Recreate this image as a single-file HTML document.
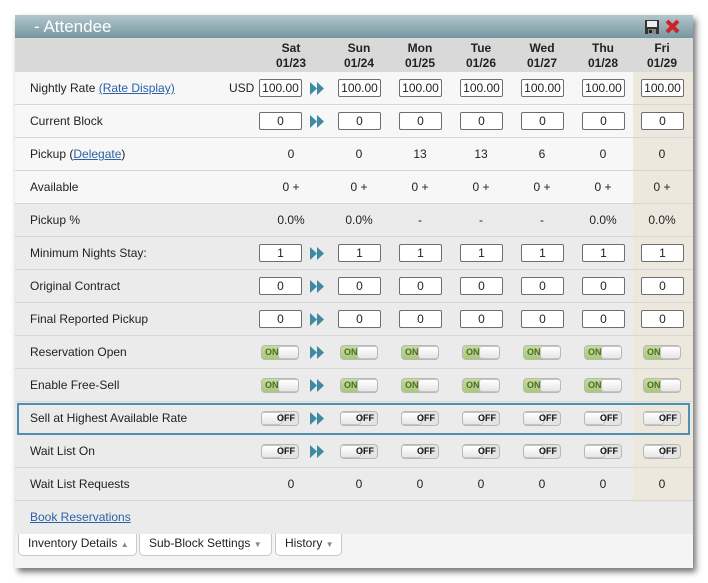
<!DOCTYPE html>
<html><head><style>
*{box-sizing:border-box;margin:0;padding:0}
body{width:708px;height:583px;background:#fff;font-family:"Liberation Sans",Arial,sans-serif;font-size:12px;color:#222;position:relative;overflow:hidden}
#p{position:absolute;left:15px;top:15px;width:678px;height:553px;background:#f4f4f4;box-shadow:3px 4px 6px rgba(0,0,0,.55);overflow:hidden}
#hd{position:absolute;left:0;top:0;width:678px;height:23px;background:linear-gradient(#b3c6cc,#7596a0);color:#fff;font-size:17px;line-height:23px;padding-left:19px}
#ch{position:absolute;left:0;top:23px;width:678px;height:34px;background:#d9d9d9}
.h{position:absolute;top:3px;width:60px;text-align:center;font-weight:bold;line-height:15px}
.r{position:absolute;left:0;width:678px;height:33px;border-bottom:1px solid #d6d6d6}
.l{position:absolute;left:15px;top:0;line-height:33px}
.a{color:#2a62a8;text-decoration:underline}
.in{position:absolute;top:7px;width:43px;height:18px;border:1px solid #6e6e6e;border-radius:2px;background:#fff;text-align:center;line-height:16px}
.t{position:absolute;width:60px;text-align:center;line-height:33px}
.ar{position:absolute;top:10px}
.tg{position:absolute;top:9px;width:38px;height:15px;border:1px solid #b8b8b8;border-radius:4px;background:#e4e4e4;font-size:9px;font-weight:bold;line-height:13px;overflow:hidden}
.on{background:linear-gradient(#c4dc9c,#a9c978);color:#4d6a2a;padding-left:3px}
.k{position:absolute;top:0;width:21px;height:13px;background:linear-gradient(#fff,#e6e6e6);border:1px solid #c4c4c4;border-radius:3px}
.on .k{right:-1px}
.off .k{left:-1px}
.off span{position:absolute;right:3px;color:#111}
#fri{position:absolute;left:618px;top:57px;width:60px;height:430px;background:#ece8de}
.tab{position:absolute;top:519px;height:22px;background:#fff;border:1px solid #c8c8c8;border-top:none;border-radius:0 0 5px 5px;line-height:19px;padding-left:9px;color:#222}
.tri{font-size:8px;color:#888}
</style></head><body>
<div id="p">
<div id="hd">- Attendee
<svg style="position:absolute;left:629px;top:4px" width="16" height="16"><rect x="1" y="1" width="14" height="14" fill="#333"/><rect x="3" y="2" width="10" height="6" fill="#eee"/><rect x="4" y="10" width="8" height="5" fill="#888"/><rect x="5" y="11" width="3" height="3" fill="#222"/></svg>
<svg style="position:absolute;left:650px;top:4px" width="15" height="15"><path d="M2 2L13 13M13 2L2 13" stroke="#d42020" stroke-width="4"/></svg>
</div>
<div id="ch">
<div class="h" style="left:246px">Sat<br>01/23</div>
<div class="h" style="left:314px">Sun<br>01/24</div>
<div class="h" style="left:375px">Mon<br>01/25</div>
<div class="h" style="left:436px">Tue<br>01/26</div>
<div class="h" style="left:497px">Wed<br>01/27</div>
<div class="h" style="left:558px">Thu<br>01/28</div>
<div class="h" style="left:617px">Fri<br>01/29</div>
</div>
<div style="position:absolute;left:0;top:57px;width:678px;height:132px;background:#f7f7f7"></div>
<div style="position:absolute;left:0;top:189px;width:678px;height:330px;background:#ebebeb"></div>
<div id="fri"></div>

<div class="r" style="top:57px"><div class="l">Nightly Rate <span class="a">(Rate Display)</span></div>
<div class="t" style="left:214px;width:30px;text-align:left">USD</div>
<div class="in" style="left:244px">100.00</div><svg class="ar" style="left:294px" width="17" height="13"><path d="M1 0L8 6.5L1 13ZM8 0L15 6.5L8 13Z" fill="#3f8aa0"/></svg>
<div class="in" style="left:323px">100.00</div><div class="in" style="left:384px">100.00</div><div class="in" style="left:445px">100.00</div><div class="in" style="left:506px">100.00</div><div class="in" style="left:567px">100.00</div><div class="in" style="left:626px">100.00</div></div>

<div class="r" style="top:90px"><div class="l">Current Block</div>
<div class="in" style="left:244px">0</div><svg class="ar" style="left:294px" width="17" height="13"><path d="M1 0L8 6.5L1 13ZM8 0L15 6.5L8 13Z" fill="#3f8aa0"/></svg>
<div class="in" style="left:323px">0</div><div class="in" style="left:384px">0</div><div class="in" style="left:445px">0</div><div class="in" style="left:506px">0</div><div class="in" style="left:567px">0</div><div class="in" style="left:626px">0</div></div>

<div class="r" style="top:123px"><div class="l">Pickup (<span class="a">Delegate</span>)</div>
<div class="t" style="left:246px">0</div><div class="t" style="left:314px">0</div><div class="t" style="left:375px">13</div><div class="t" style="left:436px">13</div><div class="t" style="left:497px">6</div><div class="t" style="left:558px">0</div><div class="t" style="left:617px">0</div></div>

<div class="r" style="top:156px"><div class="l">Available</div>
<div class="t" style="left:246px">0 +</div><div class="t" style="left:314px">0 +</div><div class="t" style="left:375px">0 +</div><div class="t" style="left:436px">0 +</div><div class="t" style="left:497px">0 +</div><div class="t" style="left:558px">0 +</div><div class="t" style="left:617px">0 +</div></div>

<div class="r" style="top:189px"><div class="l">Pickup %</div>
<div class="t" style="left:246px">0.0%</div><div class="t" style="left:314px">0.0%</div><div class="t" style="left:375px">-</div><div class="t" style="left:436px">-</div><div class="t" style="left:497px">-</div><div class="t" style="left:558px">0.0%</div><div class="t" style="left:617px">0.0%</div></div>

<div class="r" style="top:222px"><div class="l">Minimum Nights Stay:</div>
<div class="in" style="left:244px">1</div><svg class="ar" style="left:294px" width="17" height="13"><path d="M1 0L8 6.5L1 13ZM8 0L15 6.5L8 13Z" fill="#3f8aa0"/></svg>
<div class="in" style="left:323px">1</div><div class="in" style="left:384px">1</div><div class="in" style="left:445px">1</div><div class="in" style="left:506px">1</div><div class="in" style="left:567px">1</div><div class="in" style="left:626px">1</div></div>

<div class="r" style="top:255px"><div class="l">Original Contract</div>
<div class="in" style="left:244px">0</div><svg class="ar" style="left:294px" width="17" height="13"><path d="M1 0L8 6.5L1 13ZM8 0L15 6.5L8 13Z" fill="#3f8aa0"/></svg>
<div class="in" style="left:323px">0</div><div class="in" style="left:384px">0</div><div class="in" style="left:445px">0</div><div class="in" style="left:506px">0</div><div class="in" style="left:567px">0</div><div class="in" style="left:626px">0</div></div>

<div class="r" style="top:288px"><div class="l">Final Reported Pickup</div>
<div class="in" style="left:244px">0</div><svg class="ar" style="left:294px" width="17" height="13"><path d="M1 0L8 6.5L1 13ZM8 0L15 6.5L8 13Z" fill="#3f8aa0"/></svg>
<div class="in" style="left:323px">0</div><div class="in" style="left:384px">0</div><div class="in" style="left:445px">0</div><div class="in" style="left:506px">0</div><div class="in" style="left:567px">0</div><div class="in" style="left:626px">0</div></div>

<div class="r" style="top:321px"><div class="l">Reservation Open</div>
<div class="tg on" style="left:246px">ON<div class="k"></div></div><svg class="ar" style="left:294px" width="17" height="13"><path d="M1 0L8 6.5L1 13ZM8 0L15 6.5L8 13Z" fill="#3f8aa0"/></svg>
<div class="tg on" style="left:325px">ON<div class="k"></div></div><div class="tg on" style="left:386px">ON<div class="k"></div></div><div class="tg on" style="left:447px">ON<div class="k"></div></div><div class="tg on" style="left:508px">ON<div class="k"></div></div><div class="tg on" style="left:569px">ON<div class="k"></div></div><div class="tg on" style="left:628px">ON<div class="k"></div></div></div>

<div class="r" style="top:354px"><div class="l">Enable Free-Sell</div>
<div class="tg on" style="left:246px">ON<div class="k"></div></div><svg class="ar" style="left:294px" width="17" height="13"><path d="M1 0L8 6.5L1 13ZM8 0L15 6.5L8 13Z" fill="#3f8aa0"/></svg>
<div class="tg on" style="left:325px">ON<div class="k"></div></div><div class="tg on" style="left:386px">ON<div class="k"></div></div><div class="tg on" style="left:447px">ON<div class="k"></div></div><div class="tg on" style="left:508px">ON<div class="k"></div></div><div class="tg on" style="left:569px">ON<div class="k"></div></div><div class="tg on" style="left:628px">ON<div class="k"></div></div></div>

<div class="r" style="top:387px;border-bottom:none"><div class="l">Sell at Highest Available Rate</div>
<div class="tg off" style="left:246px"><div class="k"></div><span>OFF</span></div><svg class="ar" style="left:294px" width="17" height="13"><path d="M1 0L8 6.5L1 13ZM8 0L15 6.5L8 13Z" fill="#3f8aa0"/></svg>
<div class="tg off" style="left:325px"><div class="k"></div><span>OFF</span></div><div class="tg off" style="left:386px"><div class="k"></div><span>OFF</span></div><div class="tg off" style="left:447px"><div class="k"></div><span>OFF</span></div><div class="tg off" style="left:508px"><div class="k"></div><span>OFF</span></div><div class="tg off" style="left:569px"><div class="k"></div><span>OFF</span></div><div class="tg off" style="left:628px"><div class="k"></div><span>OFF</span></div></div>
<div style="position:absolute;left:2px;top:388px;width:673px;height:32px;border:2px solid #4f8fb0"></div>

<div class="r" style="top:420px"><div class="l">Wait List On</div>
<div class="tg off" style="left:246px"><div class="k"></div><span>OFF</span></div><svg class="ar" style="left:294px" width="17" height="13"><path d="M1 0L8 6.5L1 13ZM8 0L15 6.5L8 13Z" fill="#3f8aa0"/></svg>
<div class="tg off" style="left:325px"><div class="k"></div><span>OFF</span></div><div class="tg off" style="left:386px"><div class="k"></div><span>OFF</span></div><div class="tg off" style="left:447px"><div class="k"></div><span>OFF</span></div><div class="tg off" style="left:508px"><div class="k"></div><span>OFF</span></div><div class="tg off" style="left:569px"><div class="k"></div><span>OFF</span></div><div class="tg off" style="left:628px"><div class="k"></div><span>OFF</span></div></div>

<div class="r" style="top:453px"><div class="l">Wait List Requests</div>
<div class="t" style="left:246px">0</div><div class="t" style="left:314px">0</div><div class="t" style="left:375px">0</div><div class="t" style="left:436px">0</div><div class="t" style="left:497px">0</div><div class="t" style="left:558px">0</div><div class="t" style="left:617px">0</div></div>

<div class="r" style="top:486px;border-bottom:none"><div class="l a">Book Reservations</div></div>

<div class="tab" style="left:3px;width:119px">Inventory Details <span class="tri">▲</span></div>
<div class="tab" style="left:124px;width:133px">Sub-Block Settings <span class="tri">▼</span></div>
<div class="tab" style="left:260px;width:67px">History <span class="tri">▼</span></div>
</div>
</body></html>
